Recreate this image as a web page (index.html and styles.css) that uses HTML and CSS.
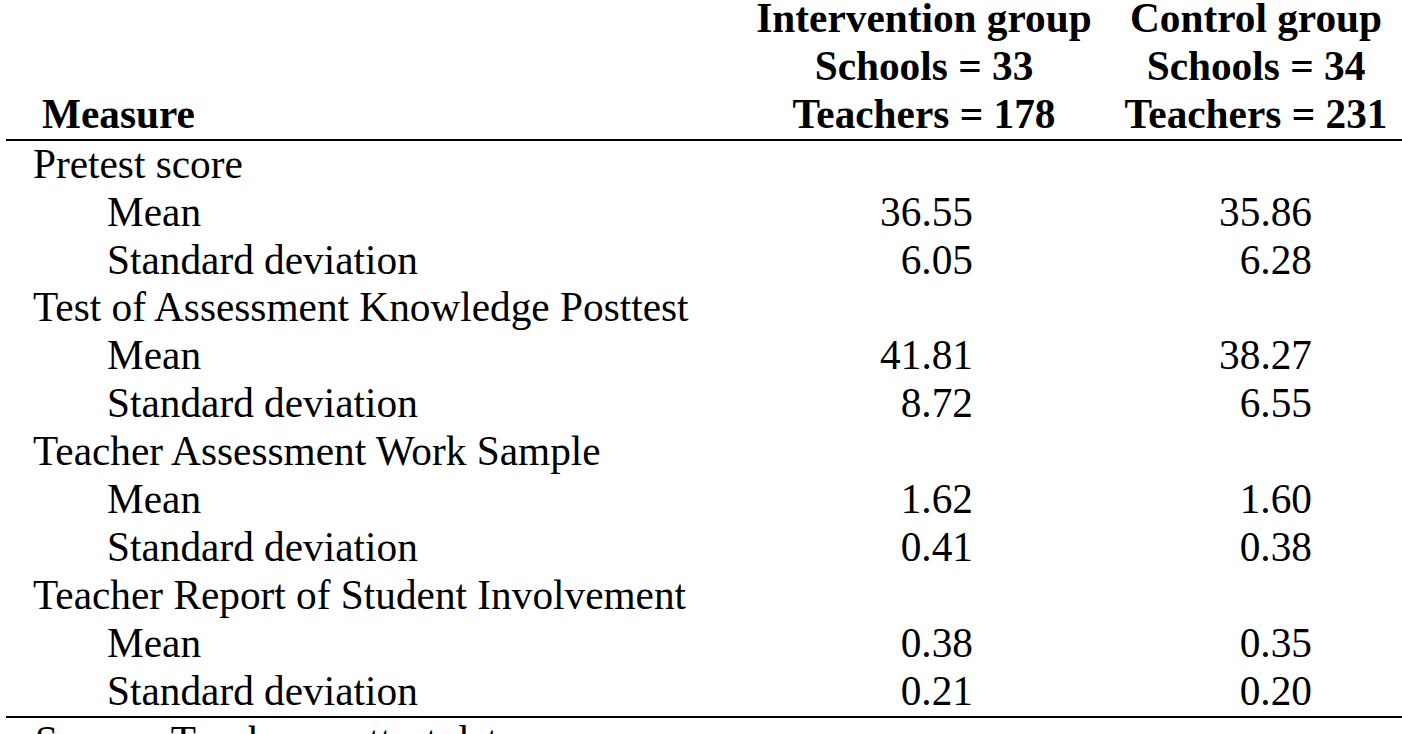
FILE: index.html
```html
<!DOCTYPE html>
<html lang="en">
<head>
<meta charset="utf-8">
<title>Measures by group</title>
<link rel="stylesheet" href="styles.css">
</head>
<body>
<table class="stats">
  <colgroup>
    <col class="c-measure">
    <col class="c-int">
    <col class="c-ctl">
  </colgroup>
  <thead>
    <tr>
      <th class="h-measure">Measure</th>
      <th class="h-group">Intervention group<br>Schools = 33<br>Teachers = 178</th>
      <th class="h-group h-ctl">Control group<br>Schools = 34<br>Teachers = 231</th>
    </tr>
  </thead>
  <tbody>
    <tr><td class="cat">Pretest score</td><td></td><td></td></tr>
    <tr><td class="sub">Mean</td><td class="n-int">36.55</td><td class="n-ctl">35.86</td></tr>
    <tr><td class="sub">Standard deviation</td><td class="n-int">6.05</td><td class="n-ctl">6.28</td></tr>
    <tr><td class="cat">Test of Assessment Knowledge Posttest</td><td></td><td></td></tr>
    <tr><td class="sub">Mean</td><td class="n-int">41.81</td><td class="n-ctl">38.27</td></tr>
    <tr><td class="sub">Standard deviation</td><td class="n-int">8.72</td><td class="n-ctl">6.55</td></tr>
    <tr><td class="cat">Teacher Assessment Work Sample</td><td></td><td></td></tr>
    <tr><td class="sub">Mean</td><td class="n-int">1.62</td><td class="n-ctl">1.60</td></tr>
    <tr><td class="sub">Standard deviation</td><td class="n-int">0.41</td><td class="n-ctl">0.38</td></tr>
    <tr><td class="cat">Teacher Report of Student Involvement</td><td></td><td></td></tr>
    <tr><td class="sub">Mean</td><td class="n-int">0.38</td><td class="n-ctl">0.35</td></tr>
    <tr class="last"><td class="sub">Standard deviation</td><td class="n-int">0.21</td><td class="n-ctl">0.20</td></tr>
  </tbody>
</table>
<p class="source">Source: Teacher posttest data.</p>
</body>
</html>
```

FILE: styles.css
```css
html, body {
  margin: 0;
  padding: 0;
  background: #ffffff;
  color: #000000;
  font-family: "Liberation Serif", "Times New Roman", serif;
  font-size: 41.3px;
  line-height: 47.9px;
  overflow: hidden;
}

.stats {
  border-collapse: collapse;
  table-layout: fixed;
  width: 1396px;
  margin: -5px 0 0 6px;
}

.c-measure { width: 744px; }
.c-int { width: 348px; }
.c-ctl { width: 304px; }

.stats th,
.stats td {
  padding: 0;
  white-space: nowrap;
}

.stats thead th {
  font-weight: bold;
  border-bottom: 2px solid #000;
  vertical-align: bottom;
}

.h-measure {
  text-align: left;
  padding-left: 36px !important;
}

.h-group {
  text-align: center;
}

.h-ctl {
  padding-left: 12px !important;
}

.cat {
  padding-left: 27px !important;
}

.sub {
  padding-left: 101px !important;
}

.n-int {
  text-align: right;
  padding-right: 125px !important;
}

.n-ctl {
  text-align: right;
  padding-right: 90px !important;
}

.stats tr.last td {
  border-bottom: 2px solid #000;
}

.source {
  margin: 0;
  padding-left: 35px;
}
```
